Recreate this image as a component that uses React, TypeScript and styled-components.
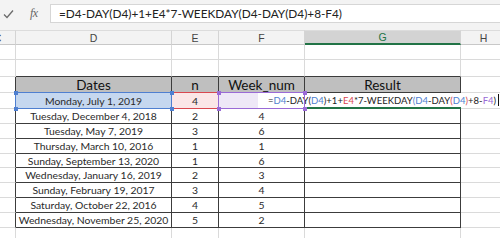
import React from 'react';
import styled, { createGlobalStyle } from 'styled-components';

const GlobalStyle = createGlobalStyle`
  html, body {
    margin: 0;
    padding: 0;
    background: #ffffff;
    overflow: hidden;
  }
  body {
    font-family: Lato, 'Open Sans', sans-serif;
    color: #222;
  }
`;

const Page = styled.div`
  width: 500px;
  height: 238px;
  overflow: hidden;
  position: relative;
`;

const FormulaBar = styled.div`
  height: 30px;
  box-sizing: border-box;
  background: #f3f3f3;
  display: flex;
  align-items: flex-start;
  padding-top: 4px;
`;

const IconBox = styled.div`
  width: 47px;
  height: 19px;
  display: flex;
  align-items: center;
  padding-left: 3px;
  box-sizing: border-box;
  gap: 16px;
`;

const Fx = styled.span`
  font-family: 'Liberation Serif', 'DejaVu Serif', serif;
  font-style: italic;
  font-size: 12px;
  color: #666;
  letter-spacing: -0.5px;
`;

const FormulaInput = styled.div`
  flex: 1;
  height: 19px;
  margin-left: 3px;
  box-sizing: border-box;
  background: #ffffff;
  border: 1px solid #d6d6d6;
  border-right: none;
  padding-left: 8px;
  font-family: Lato, sans-serif;
  font-size: 11.8px;
  line-height: 17px;
  color: #222;
  white-space: nowrap;
`;

const Sheet = styled.div`
  display: grid;
  grid-template-columns: 36px 156px 47px 86px 156px 46px;
  grid-template-rows: 15px 15px 16.7px 16.6px 16px repeat(8, 14.8px) 20px;
  margin-left: -20px;
  width: 527px;
`;

const ColHeader = styled.div<{ $active?: boolean }>`
  box-sizing: border-box;
  background: ${(p) => (p.$active ? '#d3d3d3' : '#f3f3f3')};
  border-top: 1px solid #dcdcdc;
  border-right: 1px solid #d4d4d4;
  border-bottom: ${(p) => (p.$active ? '2px solid #217346' : '1px solid #c8c8c8')};
  color: ${(p) => (p.$active ? '#217346' : '#444')};
  font-family: 'Liberation Sans', Arial, sans-serif;
  font-size: 10.5px;
  display: flex;
  align-items: center;
  justify-content: center;
`;

const Cell = styled.div<{
  $right?: string;
  $bottom?: string;
  $bg?: string;
  $head?: boolean;
}>`
  position: relative;
  box-sizing: border-box;
  border-right: 1px solid ${(p) => p.$right || '#dadada'};
  border-bottom: 1px solid ${(p) => p.$bottom || '#dadada'};
  background: ${(p) => p.$bg || '#ffffff'};
  display: flex;
  align-items: center;
  justify-content: center;
  font-size: ${(p) => (p.$head ? '13.5px' : '10.4px')};
  color: ${(p) => (p.$head ? '#111' : '#2a2a2a')};
  white-space: nowrap;
  padding-top: ${(p) => (p.$head ? '1px' : '0')};
`;

const Frame = styled.div<{ $color: string; $z?: number }>`
  position: absolute;
  left: -1px;
  right: -1px;
  top: -1px;
  bottom: -1px;
  border: 1.5px solid ${(p) => p.$color};
  z-index: ${(p) => p.$z ?? 3};
  pointer-events: none;
`;

const Handle = styled.span<{ $color: string; $x: 'l' | 'r'; $y: 't' | 'b' }>`
  position: absolute;
  width: 4px;
  height: 4px;
  background: ${(p) => p.$color};
  ${(p) => (p.$x === 'l' ? 'left: -2.5px;' : 'right: -2.5px;')}
  ${(p) => (p.$y === 't' ? 'top: -2.5px;' : 'bottom: -2.5px;')}
`;

const ActiveLine = styled.div`
  position: absolute;
  left: 0;
  right: -1px;
  bottom: -1px;
  height: 2px;
  background: #217346;
  z-index: 2;
`;

const EditBox = styled.div`
  position: absolute;
  left: -47px;
  top: 0;
  bottom: 0;
  width: 240px;
  background: #ffffff;
  z-index: 1;
  padding-left: 10px;
  box-sizing: border-box;
  font-family: Lato, sans-serif;
  font-size: 9.5px;
  line-height: 16px;
  color: #222;
  white-space: nowrap;
`;

const Ref = styled.span<{ $c: string }>`
  color: ${(p) => p.$c};
`;

const Caret = styled.span`
  display: inline-block;
  width: 1px;
  height: 12px;
  background: #111;
  margin-left: 2px;
  vertical-align: -2px;
`;

const BLUE = '#4f7fd0';
const RED = '#d9474f';
const PURPLE = '#9a6ad6';
const DARK = '#3c3c3c';

const rows: [string, number, number | ''][] = [
  ['Monday, July 1, 2019', 4, ''],
  ['Tuesday, December 4, 2018', 2, 4],
  ['Tuesday, May 7, 2019', 3, 6],
  ['Thursday, March 10, 2016', 1, 1],
  ['Sunday, September 13, 2020', 1, 6],
  ['Wednesday, January 16, 2019', 2, 3],
  ['Sunday, February 19, 2017', 3, 4],
  ['Saturday, October 22, 2016', 4, 5],
  ['Wednesday, November 25, 2020', 5, 2],
];

const Check = () => (
  <svg width="11" height="10" viewBox="0 0 11 10">
    <polyline points="1,5.5 4,8.5 10,1.5" fill="none" stroke="#6b6b6b" strokeWidth="1.3" />
  </svg>
);

const Handles = ({ color }: { color: string }) => (
  <>
    <Handle $color={color} $x="l" $y="t" />
    <Handle $color={color} $x="r" $y="t" />
    <Handle $color={color} $x="l" $y="b" />
    <Handle $color={color} $x="r" $y="b" />
  </>
);

const ColoredFormula = () => (
  <>
    {'='}
    <Ref $c={BLUE}>D4</Ref>
    {'-DAY('}
    <Ref $c={BLUE}>D4</Ref>
    {')+1+'}
    <Ref $c={RED}>E4</Ref>
    {'*7-WEEKDAY'}
    <Ref $c={BLUE}>(</Ref>
    <Ref $c={BLUE}>D4</Ref>
    {'-DAY'}
    <Ref $c={RED}>(</Ref>
    <Ref $c={BLUE}>D4</Ref>
    <Ref $c={RED}>)</Ref>
    {'+8-'}
    <Ref $c={PURPLE}>F4</Ref>
    {')'}
  </>
);

const GridRow = ({ bottom }: { bottom?: boolean }) => (
  <>
    <Cell />
    {[0, 1, 2, 3].map((i) => (
      <Cell key={i} $bottom={bottom ? DARK : undefined} />
    ))}
    <Cell />
  </>
);

export default function App() {
  return (
    <Page>
      <GlobalStyle />
      <FormulaBar>
        <IconBox>
          <Check />
          <Fx>fx</Fx>
        </IconBox>
        <FormulaInput>=D4-DAY(D4)+1+E4*7-WEEKDAY(D4-DAY(D4)+8-F4)</FormulaInput>
      </FormulaBar>

      <Sheet>
        {['C', 'D', 'E', 'F', 'G', 'H'].map((c) => (
          <ColHeader key={c} $active={c === 'G'}>
            {c}
          </ColHeader>
        ))}

        <GridRow />
        <GridRow bottom />

        <Cell $right={DARK} />
        {['Dates', 'n', 'Week_num', 'Result'].map((h) => (
          <Cell key={h} $head $bg="#bfbfbf" $right={DARK} $bottom={DARK}>
            {h}
          </Cell>
        ))}
        <Cell />

        {rows.map(([date, n, week], i) => {
          const first = i === 0;
          return (
            <React.Fragment key={date}>
              <Cell $right={DARK} />
              <Cell $right={DARK} $bottom={DARK} $bg={first ? '#c5d7ef' : undefined}>
                {date}
                {first && (
                  <Frame $color={BLUE}>
                    <Handles color={BLUE} />
                  </Frame>
                )}
              </Cell>
              <Cell $right={DARK} $bottom={DARK} $bg={first ? '#fbe6e7' : undefined}>
                {n}
                {first && <Frame $color={RED} $z={2} />}
              </Cell>
              <Cell $right={DARK} $bottom={DARK} $bg={first ? '#eee8f7' : undefined}>
                {week}
                {first && (
                  <Frame $color={PURPLE}>
                    <Handles color={PURPLE} />
                  </Frame>
                )}
              </Cell>
              <Cell $right={DARK} $bottom={DARK}>
                {first && (
                  <>
                    <EditBox>
                      <ColoredFormula />
                      <Caret />
                    </EditBox>
                    <ActiveLine />
                  </>
                )}
              </Cell>
              <Cell />
            </React.Fragment>
          );
        })}

        <GridRow />
      </Sheet>
    </Page>
  );
}
